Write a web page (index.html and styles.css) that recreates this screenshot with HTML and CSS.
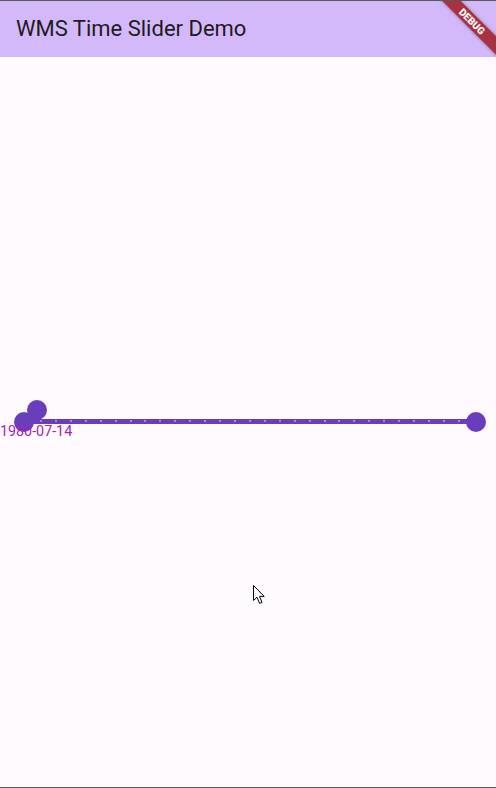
FILE: index.html
```html
<!DOCTYPE html>
<html lang="en">
<head>
<meta charset="utf-8">
<title>WMS Time Slider Demo</title>
<link rel="stylesheet" href="styles.css">
</head>
<body>
<div class="screen">
  <header class="app-bar">
    <h1 class="app-title">WMS Time Slider Demo</h1>
  </header>
  <main class="content">
    <div class="time-slider">
      <div class="track"></div>
      <div class="ticks">
        <span></span><span></span><span></span><span></span><span></span><span></span>
        <span></span><span></span><span></span><span></span><span></span><span></span>
        <span></span><span></span><span></span><span></span><span></span><span></span>
        <span></span><span></span><span></span><span></span><span></span><span></span>
        <span></span><span></span><span></span><span></span><span></span>
      </div>
      <div class="thumb thumb-start"></div>
      <div class="thumb thumb-current"></div>
      <div class="thumb thumb-end"></div>
      <div class="date-label">1980-07-14</div>
    </div>
  </main>
  <div class="debug-banner">DEBUG</div>
  <svg class="pointer" width="13" height="20" viewBox="0 0 13 20">
    <path d="M0.5 0.5 L0.5 15.5 L4 12.2 L6.6 18.4 L9 17.4 L6.5 11.4 L11.2 11.4 Z" fill="#fff" stroke="#000" stroke-width="1" stroke-linejoin="round"/>
  </svg>
</div>
</body>
</html>
```
FILE: styles.css
```css
* {
  box-sizing: border-box;
}

html, body {
  margin: 0;
  padding: 0;
  height: 100%;
}

body {
  font-family: Roboto, "Noto Sans", sans-serif;
  background: #fef7ff;
}

.screen {
  position: relative;
  height: 788px;
  display: flex;
  flex-direction: column;
  border-top: 1px solid #5a5a5a;
  border-bottom: 1px solid #5a5a5a;
  overflow: hidden;
  background: #fffafe;
}

.app-bar {
  height: 56px;
  flex: 0 0 56px;
  background: #d3b9fa;
  display: flex;
  align-items: center;
  padding: 0 16px;
}

.app-title {
  margin: 0;
  font-size: 22px;
  font-weight: 400;
  color: #1d1b20;
  line-height: 28px;
}

.content {
  flex: 1;
  display: flex;
  flex-direction: column;
  justify-content: center;
}

/* range slider: track, divisions, thumbs and the current date */
.time-slider {
  position: relative;
  height: 48px;
}

.track {
  position: absolute;
  left: 24px;
  right: 20px;
  top: 21px;
  height: 5px;
  border-radius: 2px;
  background: #6a3dbd;
}

.ticks {
  position: absolute;
  left: 40px;
  width: 420px;
  top: 22px;
  height: 2px;
  display: flex;
  justify-content: space-between;
}

.ticks span {
  width: 2px;
  height: 2px;
  border-radius: 1px;
  background: #b7a6de;
}

.thumb {
  position: absolute;
  width: 20px;
  height: 20px;
  border-radius: 50%;
  background: #6a3dbd;
}

.thumb-start {
  left: 13.5px;
  top: 13.5px;
}

.thumb-current {
  left: 27px;
  top: 2px;
}

.thumb-end {
  left: 466px;
  top: 13.5px;
}

.date-label {
  position: absolute;
  left: 0;
  top: 25px;
  font-size: 14.3px;
  line-height: 16px;
  color: #9c27b0;
}

/* corner ribbon */
.debug-banner {
  position: absolute;
  left: 420px;
  top: 14px;
  width: 104px;
  height: 13px;
  transform: rotate(45deg);
  background: #a8323f;
  color: #fff;
  font-family: Roboto, "Liberation Sans", sans-serif;
  font-weight: 900;
  font-size: 10px;
  line-height: 13px;
  text-align: center;
  box-shadow: 0 0 4px rgba(0, 0, 0, 0.35);
}

.pointer {
  position: absolute;
  left: 253px;
  top: 584px;
}
```
